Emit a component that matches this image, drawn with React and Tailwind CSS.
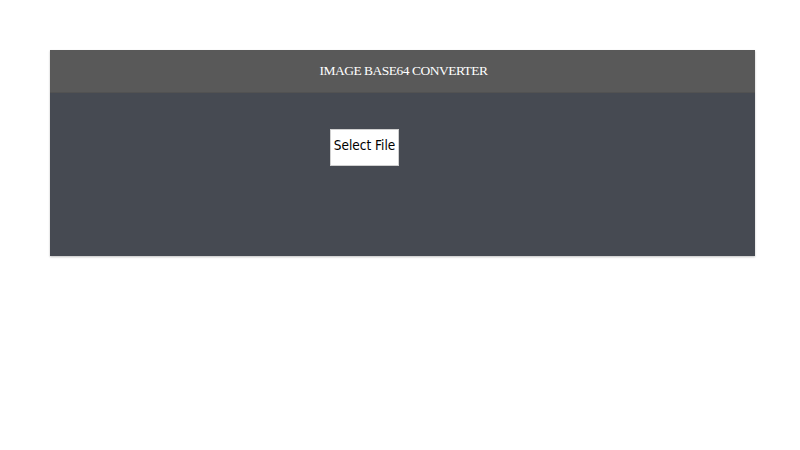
export default function App() {
  return (
    <div className="w-[800px] h-[450px] bg-white pt-[50px] pl-[50px]">
      <div className="w-[705px] shadow-[0_1px_2px_rgba(0,0,0,0.25)]">
        <div className="h-[43px] bg-[#595959] border-b border-[#525252] flex items-center justify-center text-white text-[13.5px] tracking-[-0.5px] font-['Liberation_Serif',serif] pl-[2px]">
          IMAGE BASE64 CONVERTER
        </div>
        <div className="h-[163px] bg-[#464a52] pl-[280px] pt-[36px]">
          <button className="w-[69px] h-[37px] bg-white text-black text-[13.5px] [font-stretch:condensed] whitespace-nowrap font-['DejaVu_Sans_Condensed','DejaVu_Sans',sans-serif] border border-[#d0d0d0] flex items-center justify-center pb-[5px]">
            Select File
          </button>
        </div>
      </div>
    </div>
  );
}
